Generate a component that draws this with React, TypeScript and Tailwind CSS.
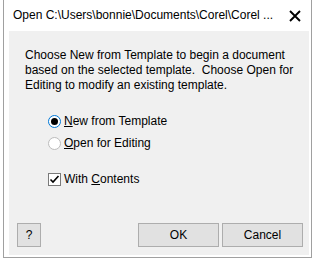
import { useState } from 'react'

const font = { fontFamily: '"Segoe UI", "Liberation Sans", Arial, sans-serif' }

function Radio({ checked }: { checked: boolean }) {
  return checked ? (
    <span className="flex h-[13px] w-[13px] items-center justify-center rounded-full border border-[#0078d7] bg-white">
      <span className="h-[7px] w-[7px] rounded-full bg-black" />
    </span>
  ) : (
    <span className="h-[13px] w-[13px] rounded-full border border-[#bcbcbc] bg-white" />
  )
}

export default function App() {
  const [mode, setMode] = useState<'new' | 'open'>('new')
  const [contents, setContents] = useState(true)

  return (
    <div className="h-[262px] w-[315px] bg-white pl-[3px] text-[12px] text-black" style={font}>
      <div className="flex h-[258px] w-[309px] flex-col border-x border-b border-[#a0a0a0] bg-white">
        <div className="flex h-[31px] items-center justify-between pl-[9px] pr-[9px]">
          <span className="leading-[15px]">Open C:\Users\bonnie\Documents\Corel\Corel ...</span>
          <svg width="12" height="12" viewBox="0 0 12 12" className="mr-[1px]">
            <path d="M1 1L11 11M11 1L1 11" stroke="#000" strokeWidth="1.9" />
          </svg>
        </div>
        <div className="mb-[2px] ml-[5px] mr-[2px] flex flex-1 flex-col bg-[#f0f0f0]">
          <p className="pl-[16px] pt-[17px] leading-[15px]">
            Choose New from Template to begin a document
            <br />
            based on the selected template.&nbsp; Choose Open for
            <br />
            Editing to modify an existing template.
          </p>
          <div className="mt-[17px] flex flex-col pl-[39px]">
            <button onClick={() => setMode('new')} className="flex h-[22px] items-center gap-[3px]">
              <Radio checked={mode === 'new'} />
              <span><u>N</u>ew from Template</span>
            </button>
            <button onClick={() => setMode('open')} className="flex h-[22px] items-center gap-[3px]">
              <Radio checked={mode === 'open'} />
              <span><u>O</u>pen for Editing</span>
            </button>
            <button onClick={() => setContents(!contents)} className="mt-[14px] flex h-[22px] items-center gap-[3px]">
              <span className="flex h-[13px] w-[13px] items-center justify-center border border-[#7a7a7a] bg-white">
                {contents && (
                  <svg width="11" height="11" viewBox="0 0 11 11">
                    <path d="M1.5 5.5L4 8L9.5 2" fill="none" stroke="#000" strokeWidth="1.6" />
                  </svg>
                )}
              </span>
              <span>With <u>C</u>ontents</span>
            </button>
          </div>
          <div className="mt-auto flex items-center pb-[8px] pl-[8px] pr-[6px]">
            <button className="h-[24px] w-[24px] border border-[#adadad] bg-[#e1e1e1]">?</button>
            <button className="ml-auto h-[24px] w-[81px] border border-[#adadad] bg-[#e1e1e1]">OK</button>
            <button className="ml-[3px] h-[24px] w-[81px] border border-[#adadad] bg-[#e1e1e1]">Cancel</button>
          </div>
        </div>
      </div>
    </div>
  )
}
